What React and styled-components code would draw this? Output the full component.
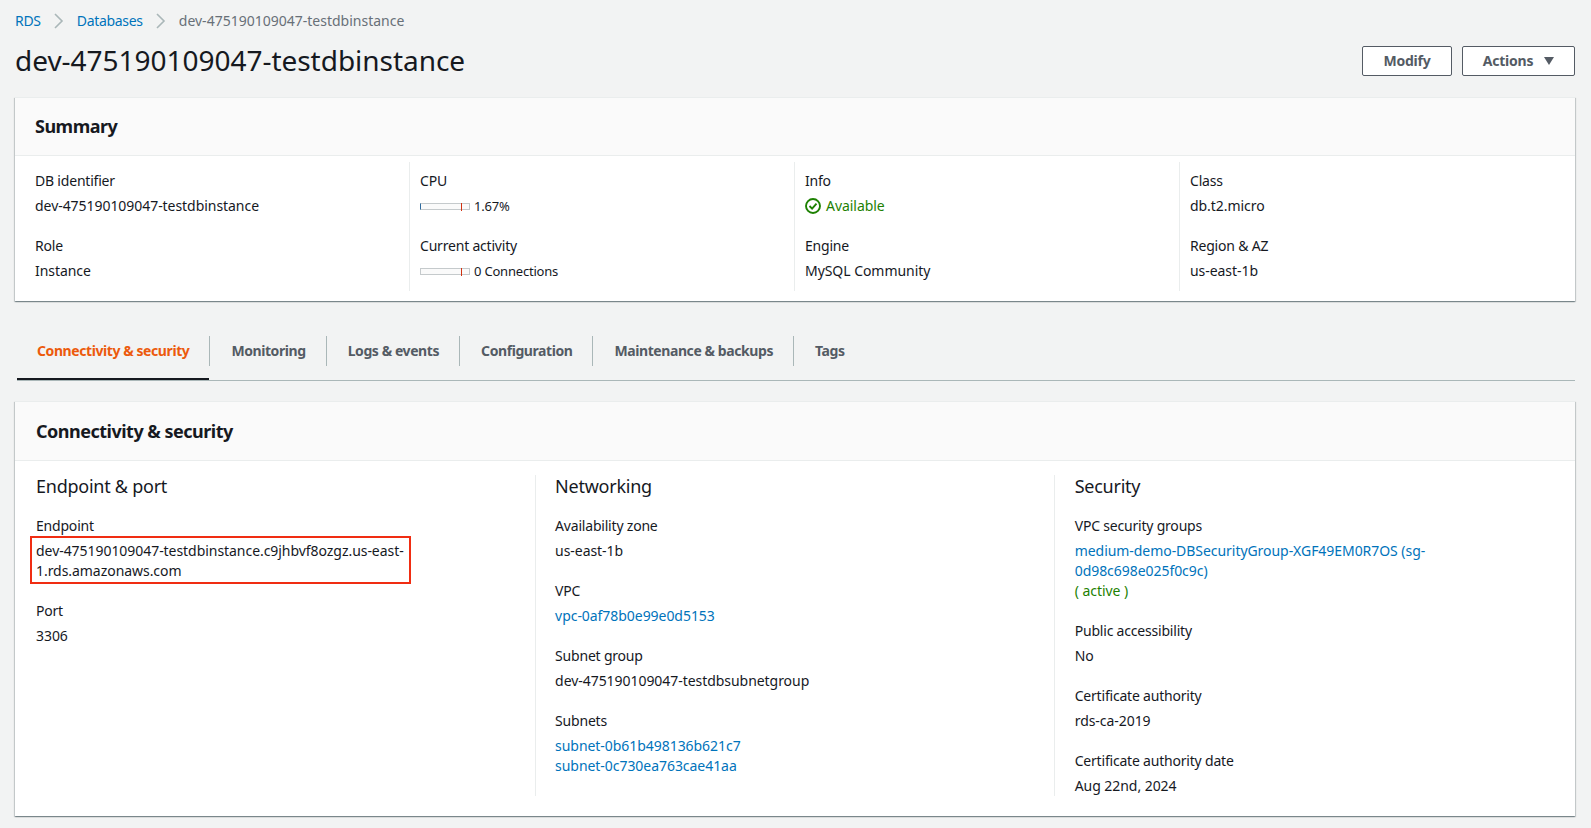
import React from "react";
import styled, { createGlobalStyle } from "styled-components";

const GlobalStyle = createGlobalStyle`
  html, body {
    margin: 0;
    background: #f2f3f3;
    color: #16191f;
    font-family: "Noto Sans", Roboto, sans-serif;
    font-size: 14px;
    line-height: 20px;
  }
`;

const Page = styled.div`
  padding: 11px 16px 12px 15px;
`;

const Breadcrumbs = styled.nav`
  display: flex;
  align-items: center;
  height: 20px;
`;

const Crumb = styled.a`
  color: #0073bb;
  letter-spacing: -0.3px;
`;

const CurrentCrumb = styled.span`
  color: #687078;
`;

const Chevron = styled.svg`
  width: 10px;
  height: 16px;
  margin: 0 13px;
  fill: none;
  stroke: #aab7b8;
  stroke-width: 1.6;
`;

const TitleRow = styled.header`
  display: flex;
  align-items: center;
  justify-content: space-between;
  margin: 12px 0 20px;
`;

const Title = styled.h1`
  margin: 0;
  font-size: 28px;
  line-height: 34px;
  font-weight: 400;
  letter-spacing: -0.03px;
`;

const Actions = styled.div`
  display: flex;
  gap: 10px;
  margin-top: 2px;
`;

const Button = styled.button`
  display: flex;
  align-items: center;
  justify-content: center;
  gap: 11px;
  width: ${props => props.$width}px;
  height: 30px;
  padding: 0;
  background: #fff;
  border: 1px solid #545b64;
  border-radius: 2px;
  color: #545b64;
  font: 700 14px/20px "Noto Sans", Roboto, sans-serif;
  letter-spacing: -0.2px;
`;

const Caret = styled.i`
  width: 0;
  height: 0;
  border-left: 5.5px solid transparent;
  border-right: 5.5px solid transparent;
  border-top: 8px solid #545b64;
`;

const Card = styled.section`
  background: #fff;
  box-shadow: 0 1px 1px 0 rgba(0, 28, 36, 0.3), 1px 1px 1px 0 rgba(0, 28, 36, 0.15),
    -1px 1px 1px 0 rgba(0, 28, 36, 0.15);
  border-top: 1px solid #eaeded;
`;

const CardHeader = styled.h2`
  margin: 0;
  padding: 0 ${props => props.$inset}px;
  height: ${props => props.$height}px;
  line-height: ${props => props.$height}px;
  background: #fafafa;
  border-bottom: 1px solid #eaeded;
  font-size: 18px;
  font-weight: 700;
  letter-spacing: -0.5px;
`;

const SummaryGrid = styled.div`
  display: grid;
  grid-template-columns: repeat(4, 385px);
  padding: 6px 0 10px 9px;
`;

const SummaryColumn = styled.div`
  padding: 9px 0 10px 10px;
  border-left: 1px solid ${props => (props.$first ? "transparent" : "#eaeded")};
`;

const DetailsGrid = styled.div`
  display: grid;
  grid-template-columns: repeat(3, 519.6px);
  padding: 14px 0 20px;
`;

const DetailsColumn = styled.div`
  padding-left: ${props => (props.$first ? 20 : 19.5)}px;
  border-left: 1px solid ${props => (props.$first ? "transparent" : "#eaeded")};
`;

const ColumnTitle = styled.h3`
  margin: 0 0 19px;
  font-size: 18px;
  line-height: 22px;
  font-weight: 400;
  letter-spacing: -0.25px;
`;

const Field = styled.div`
  margin-bottom: 20px;
  &:last-child {
    margin-bottom: 0;
  }
`;

const Label = styled.div`
  margin-bottom: 5px;
  letter-spacing: -0.2px;
`;

const Value = styled.div`
  max-width: 372px;
  letter-spacing: -0.05px;
`;

const Highlighted = styled(Value)`
  position: relative;
  &::after {
    content: "";
    position: absolute;
    top: -5px;
    bottom: -3px;
    left: -6px;
    width: 381px;
    box-sizing: border-box;
    border: 2px solid #f02d12;
  }
`;

const Link = styled.a`
  display: block;
  color: #0073bb;
`;

const Active = styled.div`
  color: #1d8102;
`;

const Status = styled.div`
  display: flex;
  align-items: center;
  gap: 5px;
  color: #1d8102;
`;

const Meter = styled.div`
  display: flex;
  align-items: center;
  gap: 4px;
  font-size: 13px;
  letter-spacing: -0.2px;
`;

const MeterBar = styled.div`
  position: relative;
  box-sizing: border-box;
  width: 50px;
  height: 7px;
  background: #fafafa;
  border: 1px solid #c5cacc;
  border-left: 1px solid ${props => (props.$used ? "#2e6a9e" : "#c5cacc")};
  &::after {
    content: "";
    position: absolute;
    top: -1px;
    bottom: -2px;
    left: 40px;
    width: 1px;
    background: #d13212;
  }
`;

const TabBar = styled.nav`
  display: flex;
  margin: 21px 0 20px 2px;
  border-bottom: 1px solid #aab7b8;
`;

const Tab = styled.div`
  padding: 14px 0;
  box-shadow: ${props => (props.$active ? "inset 0 -2px 0 #16191f" : "none")};
`;

const TabLabel = styled.div`
  height: 30px;
  line-height: 30px;
  padding: 0 20px 0 ${props => (props.$first ? 20 : 21)}px;
  border-left: ${props => (props.$first ? "none" : "1px solid #aab7b8")};
  color: ${props => (props.$active ? "#ec5a0c" : "#545b64")};
  font-weight: 700;
  letter-spacing: -0.42px;
`;

const tabs = [
  "Connectivity & security",
  "Monitoring",
  "Logs & events",
  "Configuration",
  "Maintenance & backups",
  "Tags",
];

const Separator = () => (
  <Chevron viewBox="0 0 10 16">
    <path d="M1 1l7 7-7 7" />
  </Chevron>
);

const CheckIcon = () => (
  <svg width="16" height="16" viewBox="0 0 16 16" fill="none" stroke="#1d8102" strokeWidth="1.9">
    <circle cx="8" cy="8" r="7" />
    <path d="M4.5 8l2.6 2.6 4.4-5" />
  </svg>
);

const Info = ({ label, children }) => (
  <Field>
    <Label>{label}</Label>
    <Value>{children}</Value>
  </Field>
);

export default function App() {
  return (
    <Page>
      <GlobalStyle />
      <Breadcrumbs>
        <Crumb>RDS</Crumb>
        <Separator />
        <Crumb>Databases</Crumb>
        <Separator />
        <CurrentCrumb>dev-475190109047-testdbinstance</CurrentCrumb>
      </Breadcrumbs>
      <TitleRow>
        <Title>dev-475190109047-testdbinstance</Title>
        <Actions>
          <Button $width={90}>Modify</Button>
          <Button $width={113}>
            Actions
            <Caret />
          </Button>
        </Actions>
      </TitleRow>

      <Card>
        <CardHeader $inset={20} $height={57}>Summary</CardHeader>
        <SummaryGrid>
          <SummaryColumn $first>
            <Info label="DB identifier">dev-475190109047-testdbinstance</Info>
            <Info label="Role">Instance</Info>
          </SummaryColumn>
          <SummaryColumn>
            <Info label="CPU">
              <Meter>
                <MeterBar $used />
                1.67%
              </Meter>
            </Info>
            <Info label="Current activity">
              <Meter>
                <MeterBar />0 Connections
              </Meter>
            </Info>
          </SummaryColumn>
          <SummaryColumn>
            <Info label="Info">
              <Status>
                <CheckIcon />
                Available
              </Status>
            </Info>
            <Info label="Engine">MySQL Community</Info>
          </SummaryColumn>
          <SummaryColumn>
            <Info label="Class">db.t2.micro</Info>
            <Info label="Region & AZ">us-east-1b</Info>
          </SummaryColumn>
        </SummaryGrid>
      </Card>

      <TabBar>
        {tabs.map((name, i) => (
          <Tab key={name} $active={i === 0}>
            <TabLabel $first={i === 0} $active={i === 0}>
              {name}
            </TabLabel>
          </Tab>
        ))}
      </TabBar>

      <Card>
        <CardHeader $inset={21} $height={58}>Connectivity &amp; security</CardHeader>
        <DetailsGrid>
          <DetailsColumn $first>
            <ColumnTitle>Endpoint &amp; port</ColumnTitle>
            <Field>
              <Label>Endpoint</Label>
              <Highlighted>dev-475190109047-testdbinstance.c9jhbvf8ozgz.us-east-1.rds.amazonaws.com</Highlighted>
            </Field>
            <Info label="Port">3306</Info>
          </DetailsColumn>
          <DetailsColumn>
            <ColumnTitle>Networking</ColumnTitle>
            <Info label="Availability zone">us-east-1b</Info>
            <Info label="VPC">
              <Link>vpc-0af78b0e99e0d5153</Link>
            </Info>
            <Info label="Subnet group">dev-475190109047-testdbsubnetgroup</Info>
            <Info label="Subnets">
              <Link>subnet-0b61b498136b621c7</Link>
              <Link>subnet-0c730ea763cae41aa</Link>
            </Info>
          </DetailsColumn>
          <DetailsColumn>
            <ColumnTitle>Security</ColumnTitle>
            <Info label="VPC security groups">
              <Link>medium-demo-DBSecurityGroup-XGF49EM0R7OS (sg-0d98c698e025f0c9c)</Link>
              <Active>( active )</Active>
            </Info>
            <Info label="Public accessibility">No</Info>
            <Info label="Certificate authority">rds-ca-2019</Info>
            <Info label="Certificate authority date">Aug 22nd, 2024</Info>
          </DetailsColumn>
        </DetailsGrid>
      </Card>
    </Page>
  );
}
